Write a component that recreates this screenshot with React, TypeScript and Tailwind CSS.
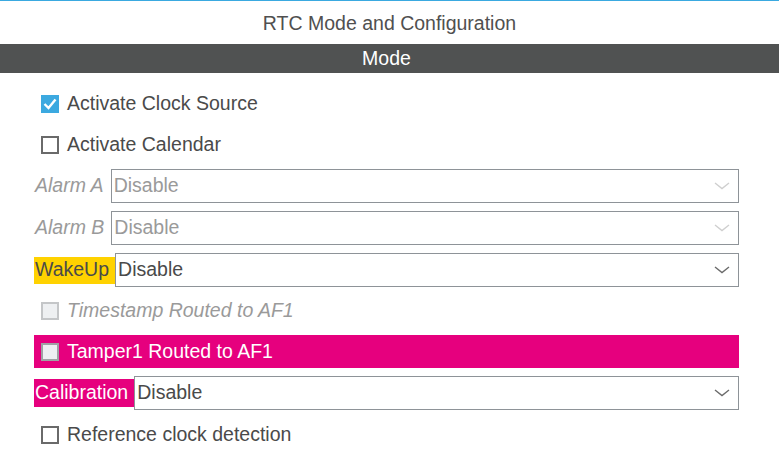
import React from "react";

const font = { fontFamily: '"Liberation Sans", Arial, sans-serif' };

function Chevron({ disabled }: { disabled?: boolean }) {
  return (
    <svg width="16" height="8" viewBox="0 0 16 8" className="shrink-0">
      <path
        d="M1 1 L8 6.5 L15 1"
        fill="none"
        stroke={disabled ? "#cfcfcf" : "#6b6b6b"}
        strokeWidth="1.4"
      />
    </svg>
  );
}

function Box({ checked, variant }: { checked?: boolean; variant?: "normal" | "disabled" | "tamper" }) {
  if (checked) {
    return (
      <div className="w-[18px] h-[18px] bg-[#3ca9e0] flex items-center justify-center shrink-0">
        <svg width="14" height="12" viewBox="0 0 14 12">
          <path d="M1.5 6 L5.5 10 L12.5 1.5" fill="none" stroke="#fff" strokeWidth="2.4" />
        </svg>
      </div>
    );
  }
  if (variant === "disabled") {
    return <div className="w-[18px] h-[18px] bg-[#eef0f2] border-2 border-[#c4c6c8] shrink-0" />;
  }
  if (variant === "tamper") {
    return <div className="w-[18px] h-[18px] bg-[#eef0f2] border-2 border-[#a0a2a4] shrink-0" />;
  }
  return <div className="w-[18px] h-[18px] bg-white border-2 border-[#6a6a6a] shrink-0" />;
}

function Select({ disabled }: { disabled?: boolean }) {
  return (
    <div className="flex-1 h-[34px] border border-[#8e9398] bg-white flex items-center justify-between pl-[2px] pr-[8px]">
      <span className={disabled ? "text-[#9a9a9a]" : "text-[#4a4a4a]"}>Disable</span>
      <Chevron disabled={disabled} />
    </div>
  );
}

export default function App() {
  return (
    <div className="w-[779px] h-[463px] bg-white overflow-hidden text-[19.5px] leading-none" style={font}>
      <div className="h-[1px] bg-[#3aa9e0]" />
      <div className="h-[43px] flex items-center justify-center pt-[2px] text-[#505050]">RTC Mode and Configuration</div>
      <div className="h-[29px] bg-[#505252] flex items-center justify-center pt-[1px] pr-[6px] text-white">Mode</div>
      <div className="flex flex-col pl-[34px] pr-[40px] pt-[14px]">
        <div className="h-[34px] flex items-center pl-[7px] gap-[8px] text-[#4a4a4a]">
          <Box checked />
          <span>Activate Clock Source</span>
        </div>
        <div className="h-[34px] mt-[7px] flex items-center pl-[7px] gap-[8px] text-[#4a4a4a]">
          <Box />
          <span>Activate Calendar</span>
        </div>
        <div className="h-[34px] mt-[7px] flex items-center">
          <span className="italic text-[#9a9a9a] pl-[1px] pr-[7px]">Alarm A</span>
          <Select disabled />
        </div>
        <div className="h-[34px] mt-[8px] flex items-center">
          <span className="italic text-[#9a9a9a] pl-[1px] pr-[7px]">Alarm B</span>
          <Select disabled />
        </div>
        <div className="h-[34px] mt-[8px] flex items-center">
          <span className="h-[27px] flex items-center bg-[#ffd200] text-[#4a4a4a] pl-[1px] pr-[6px]">WakeUp</span>
          <Select />
        </div>
        <div className="h-[34px] mt-[7px] flex items-center pl-[7px] gap-[8px] text-[#9a9a9a] italic">
          <Box variant="disabled" />
          <span>Timestamp Routed to AF1</span>
        </div>
        <div className="h-[33px] mt-[7px] flex items-center pl-[7px] gap-[8px] bg-[#e6007e] text-white">
          <Box variant="tamper" />
          <span>Tamper1 Routed to AF1</span>
        </div>
        <div className="h-[34px] mt-[8px] flex items-center">
          <span className="h-[28px] flex items-center bg-[#e6007e] text-white pl-[1px] pr-[6px]">Calibration</span>
          <Select />
        </div>
        <div className="h-[34px] mt-[8px] flex items-center pl-[7px] gap-[8px] text-[#4a4a4a]">
          <Box />
          <span>Reference clock detection</span>
        </div>
      </div>
    </div>
  );
}
